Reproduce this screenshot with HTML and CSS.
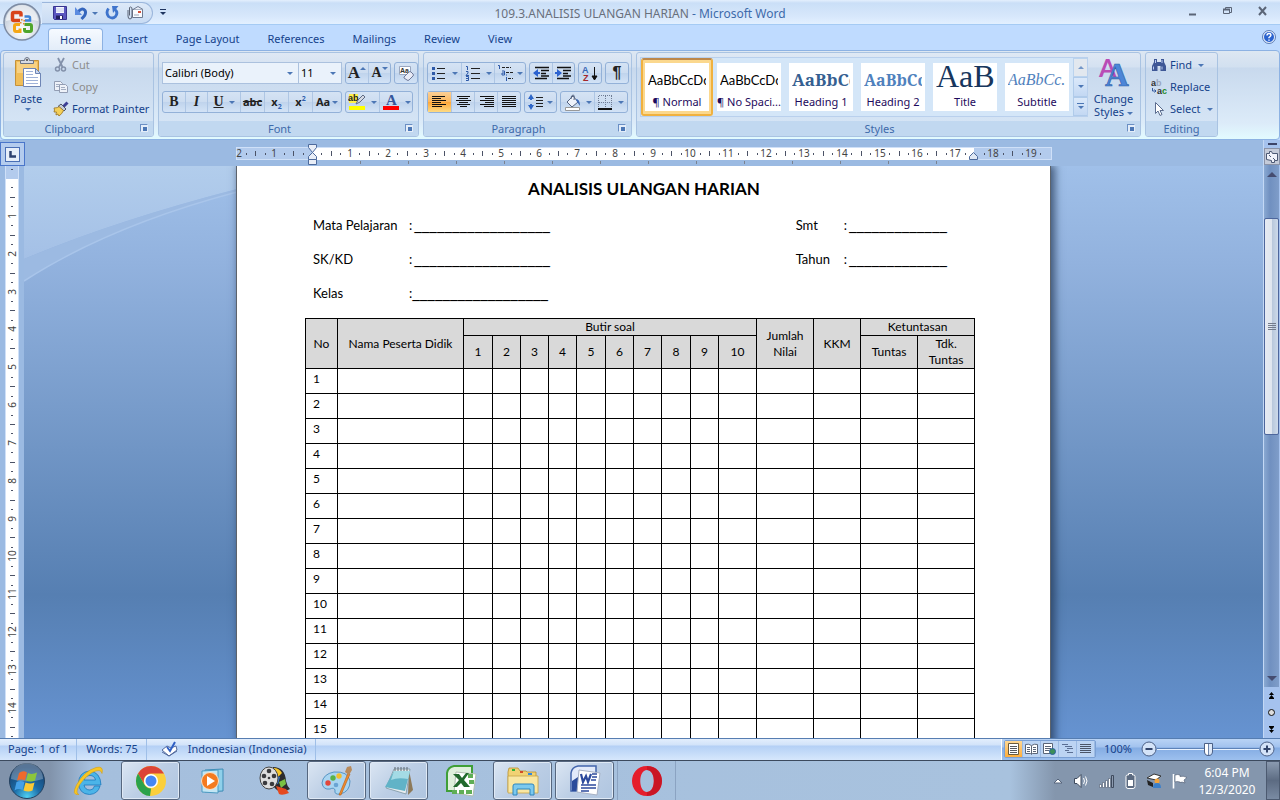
FILE: index.html
```html
<!DOCTYPE html>
<html lang="id">
<head>
    <meta charset="UTF-8">
    <meta name="viewport" content="width=device-width, initial-scale=1.0">
    <title>109.3.ANALISIS ULANGAN HARIAN - Microsoft Word</title>
    <link rel="stylesheet" href="styles.css">
</head>
<body>
    <header class="titlebar">
        <button class="orb" aria-label="Office Button">
            <svg width="38" height="38" viewBox="0 0 38 38">
                <defs>
                    <radialGradient id="orbBg" cx="50%" cy="75%" r="70%">
                        <stop offset="0" stop-color="#ffffff"/><stop offset=".5" stop-color="#dfe4ec"/><stop offset="1" stop-color="#b4bfce"/>
                    </radialGradient>
                </defs>
                <circle cx="19" cy="19" r="18" fill="url(#orbBg)" stroke="#7d8ba3" stroke-width="1.5"/>
                <path d="M3 18a16 16 0 0 1 32 0q-16-5-32 0z" fill="#fff" opacity=".6"/>
                <g fill="none">
                    <path d="M17 17.500h-6q-1.500 0-1.500-1.500v-5q0-1.500 1.500-1.500h5.500q1.500 0 1.500 1.500v2.500" stroke="#d8431a" stroke-width="3.500"/>
                    <path d="M21.500 13.500h4q1.500 0 1.500 1.500v2.500h-5" stroke="#3d83d6" stroke-width="2.500"/>
                    <path d="M17 21.500h-4q-1.500 0-1.500 1.500v4q0 1.500 1.500 1.500h4v-3" stroke="#f5a716" stroke-width="3"/>
                    <path d="M21.500 21.500h5.500q1.500 0 1.500 1.500v4q0 1.500-1.500 1.500h-4q-1.500 0-1.500-1.500v-2" stroke="#4fa52b" stroke-width="3"/>
                </g>
                <path d="M18 16h1.500v1.500H18zM20.500 17h1.500v1.500h-1.500zM17 19h1.500v1.500H17zM20 20h1.500v1.500H20z" fill="#e8832a"/>
            </svg>
        </button>
        <div class="quick">
            <button aria-label="Save">
                <svg width="16" height="16" viewBox="0 0 16 16"><path d="M1.500 1.500h13v13h-12l-1-1z" fill="#5a56c0" stroke="#38348f"/><path d="M4 2h8v6H4z" fill="#f4f6ff"/><path d="M4 4h8M4 6h8" stroke="#c5cbe8"/><path d="M4 10.500h7V14H4z" fill="#22205e"/><path d="M8 11h2v3H8z" fill="#fff"/></svg>
            </button>
            <button aria-label="Undo" class="undo">
                <svg width="14" height="16" viewBox="0 0 14 16"><path d="M4 7q4-5 7-1.500 2 3.500-3.500 8.500" fill="none" stroke="#3566bd" stroke-width="3"/><path d="M1 2v8h7z" fill="#5b8be0"/></svg>
                <i class="arrow"></i>
            </button>
            <button aria-label="Repeat">
                <svg width="16" height="16" viewBox="0 0 16 16"><path d="M4.500 3.500q-3 4 0 8 4 3 7 0 3-4-.5-7" fill="none" stroke="#3f74cc" stroke-width="2.800"/><path d="M8 1h6.500L9 8z" fill="#3f74cc"/></svg>
            </button>
            <button aria-label="E-mail">
                <svg width="18" height="16" viewBox="0 0 18 16"><path d="M6.500 4.500h10v8h-10z" fill="#fbfcff" stroke="#6e7a91"/><path d="M7 4.500l5-3 5 3" fill="#e8edf7" stroke="#6e7a91"/><path d="M12 6h3v2h-3z" fill="#d4503a"/><path d="M8 10h5" stroke="#9aa5b9"/><path d="M2 5v6q0 3 2 3t2-3V4q0-2-1.500-2T3.500 4v6.500" fill="none" stroke="#5a6375"/></svg>
            </button>
        </div>
        <button class="customize" aria-label="Customize Quick Access Toolbar"><span></span><i class="arrow dark"></i></button>
        <h1 class="caption">109.3.ANALISIS ULANGAN HARIAN <span>- Microsoft Word</span></h1>
        <div class="window-buttons">
            <button aria-label="Minimize"><svg width="11" height="10"><path d="M2 8.500h7" stroke="#5b6577" stroke-width="2"/></svg></button>
            <button aria-label="Restore"><svg width="11" height="10"><path d="M3.500 3V1.500h6v5H8M1.500 3.500h6v4h-6z" fill="none" stroke="#5b6577"/><path d="M1 3.500h7" stroke="#5b6577" stroke-width="2"/></svg></button>
            <button aria-label="Close"><svg width="11" height="10"><path d="M2 1l7 8M9 1l-7 8" stroke="#5b6577" stroke-width="2"/></svg></button>
        </div>
    </header>

    <nav class="tabs">
        <button class="tab active">Home</button>
        <button class="tab">Insert</button>
        <button class="tab">Page Layout</button>
        <button class="tab">References</button>
        <button class="tab">Mailings</button>
        <button class="tab">Review</button>
        <button class="tab">View</button>
        <button class="help" aria-label="Help"><svg width="14" height="14" viewBox="0 0 14 14"><circle cx="7" cy="7" r="6.500" fill="#e6eefb" stroke="#5b7bb4"/><circle cx="7" cy="7" r="5" fill="#2b63cf"/><path d="M5 5.500q0-2 2-2t2 1.500q0 1-2 2.500v.7M7 9.500v1.300" fill="none" stroke="#fff" stroke-width="1.400"/></svg></button>
    </nav>

    <div class="ribbon">
        <section class="group clipboard">
            <div class="group-body">
                <button class="big">
                    <svg width="28" height="32" viewBox="0 0 28 32"><path d="M1.500 3.500h23v25h-23z" fill="#f0bd57" stroke="#c4913a"/><path d="M3 5h20v11H3z" fill="#f7d183"/><path d="M6.500 6.500v-3h4q0-3 2.500-3t2.500 3h4v3z" fill="#d6dbe4" stroke="#6b7587"/><circle cx="13" cy="3" r="1" fill="#444"/><path d="M9.500 11.500h12l5 5v13h-17z" fill="#fff" stroke="#6e85b5"/><path d="M21.500 11.500v5h5z" fill="#cddaf0" stroke="#6e85b5"/><path d="M12 14.500h7M12 17.500h7M12 20.500h12M12 23.500h12M12 26.500h12" stroke="#9fb2d8"/></svg>
                    <span>Paste</span>
                    <i class="arrow"></i>
                </button>
                <div class="stack">
                    <button class="small" disabled>
                        <svg width="16" height="16" viewBox="0 0 16 16"><path d="M5 1l4.500 9M11 1L6 10" stroke="#8391aa" stroke-width="1.800" fill="none"/><circle cx="4.500" cy="12" r="2" fill="none" stroke="#8391aa" stroke-width="1.500"/><circle cx="10.500" cy="12" r="2" fill="none" stroke="#8391aa" stroke-width="1.500"/></svg>Cut
                    </button>
                    <button class="small" disabled>
                        <svg width="16" height="16" viewBox="0 0 16 16"><path d="M1.500 2.500h6l2 2v7h-8z" fill="#eef2f9" stroke="#929db3"/><path d="M6.500 5.500h6l2 2v6h-8z" fill="#eef2f9" stroke="#929db3"/><path d="M3 5.500h3M3 7.500h3M8 8.500h4M8 10.500h5" stroke="#a3aec2"/></svg>Copy
                    </button>
                    <button class="small">
                        <svg width="16" height="16" viewBox="0 0 16 16"><path d="M14.500 1.500l-4 4" stroke="#3d3f96" stroke-width="3"/><path d="M8 3l5 5-2 2-6-4.500z" fill="#c3cad8" stroke="#4b5468"/><path d="M1 7q4 0 5-1.500l4.500 4Q9 13 6 15q-1-1-1-2-1 .5-2 1 0-2 .5-3Q2 11 1 11q1-2 0-4z" fill="#f3cf58" stroke="#97701f" stroke-width=".8"/></svg>Format Painter
                    </button>
                </div>
            </div>
            <footer>Clipboard<i class="launcher"></i></footer>
        </section>

        <section class="group font">
            <div class="group-body rows">
                <div class="row">
                    <div class="combos">
                        <label class="combo family"><select aria-label="Font"><option>Calibri (Body)</option></select><i class="arrow"></i></label>
                        <label class="combo size"><select aria-label="Font Size"><option>11</option></select><i class="arrow"></i></label>
                    </div>
                    <div class="set">
                        <button class="serif" aria-label="Grow Font"><b class="grow">A</b><i class="arrow up"></i></button>
                        <button class="serif" aria-label="Shrink Font"><b>A</b><i class="arrow raised"></i></button>
                    </div>
                    <div class="set">
                        <button aria-label="Clear Formatting"><svg width="18" height="17" viewBox="0 0 18 17"><path d="M2.500 1.500h11v8h-11z" fill="#fff" stroke="#9aa7c0"/><text x="3" y="8" font-size="7" font-weight="700" font-family="Liberation Sans, sans-serif" fill="#333">Aa</text><path d="M7 12l5-5q1-1 2 0l2 2q1 1 0 2l-4 4q-1 1-2 0l-3-2z" fill="#e9ebf6" stroke="#6d7796"/></svg></button>
                    </div>
                </div>
                <div class="row">
                    <div class="set">
                        <button class="serif"><b>B</b></button>
                        <button class="serif"><em>I</em></button>
                        <button class="serif drop"><u>U</u><i class="arrow"></i></button>
                        <button class="mid bold"><s>abc</s></button>
                        <button class="mid bold" aria-label="Subscript"><span>x<sub>2</sub></span></button>
                        <button class="mid bold" aria-label="Superscript"><span>x<sup>2</sup></span></button>
                        <button class="aa bold" aria-label="Change Case">Aa<i class="arrow"></i></button>
                    </div>
                    <div class="set">
                        <button class="drop" aria-label="Text Highlight Color"><svg width="18" height="18" viewBox="0 0 18 18"><path d="M1 1h9v9H1z" fill="#fff04a"/><text x="0" y="8" font-size="9" font-weight="700" font-family="Liberation Sans, sans-serif" fill="#222">ab</text><path d="M8 11l2-4 5-5 2 2-5 5z" fill="#d5dae5" stroke="#5e6a82"/><path d="M1 13h16v4H1z" fill="#ff0"/></svg><i class="arrow"></i></button>
                        <button class="drop" aria-label="Font Color"><svg width="18" height="18" viewBox="0 0 18 18"><text x="4" y="12" font-size="15" font-weight="700" font-family="Liberation Serif, serif" fill="#35569b">A</text><path d="M1 13h16v4H1z" fill="#f00"/></svg><i class="arrow"></i></button>
                    </div>
                </div>
            </div>
            <footer>Font<i class="launcher"></i></footer>
        </section>

        <section class="group paragraph">
            <div class="group-body rows">
                <div class="row">
                    <div class="set">
                        <button class="drop" aria-label="Bullets"><svg width="16" height="16"><path d="M6 3.500h8M6 8.500h8M6 13.500h8" stroke="#222"/><path d="M1 2h3v3H1zM1 7h3v3H1zM1 12h3v3H1z" fill="#2f5aa8"/></svg><i class="arrow"></i></button>
                        <button class="drop" aria-label="Numbering"><svg width="16" height="16"><path d="M6 3.500h9M6 8.500h9M6 13.500h9" stroke="#222"/><path d="M1 1.500h1.500V5M1 6.500h2v1.500L1 10.500h3M1 11.500h2.500v4H1M1 13.500h2" fill="none" stroke="#2f5aa8"/></svg><i class="arrow"></i></button>
                        <button class="multi" aria-label="Multilevel List"><svg width="17" height="16"><path d="M5 2.500h9M9 7.500h7M11 13.500h5" stroke="#222" stroke-dasharray="3 1"/><path d="M1 .5h1.500V4M5 6h2.500v4H5V8h2.500M9.500 12v4M9.500 9.500v1" fill="none" stroke="#2f5aa8"/></svg><i class="arrow"></i></button>
                    </div>
                    <div class="set">
                        <button aria-label="Decrease Indent"><svg width="17" height="15"><path d="M2 1.500h14M8 4.500h8M8 7.500h5M8 10h8M2 12.500h12" stroke="#111" stroke-width="1.400"/><path d="M0 7l5-4v3h2v2H5v3z" fill="#2c62d0"/></svg></button>
                        <button aria-label="Increase Indent"><svg width="17" height="15"><path d="M2 1.500h14M8 4.500h8M8 7.500h5M8 10h8M2 12.500h12" stroke="#111" stroke-width="1.400"/><path d="M7 7L2 3v3H0v2h2v3z" fill="#2c62d0"/></svg></button>
                    </div>
                    <div class="set">
                        <button aria-label="Sort"><svg width="17" height="17"><text x="0" y="8" font-size="9" font-weight="700" font-family="Liberation Sans, sans-serif" fill="#3465b4">A</text><text x="1" y="16" font-size="9" font-weight="700" font-family="Liberation Sans, sans-serif" fill="#a4272b">Z</text><path d="M12.500 2v12M10 11l2.500 4 2.500-4z" stroke="#111" fill="#111"/></svg></button>
                    </div>
                    <div class="set">
                        <button class="pilcrow" aria-label="Show/Hide">¶</button>
                    </div>
                </div>
                <div class="row">
                    <div class="set aligns">
                        <button class="pressed" aria-label="Align Left"><svg width="15" height="12"><path d="M0 .5h13M0 2.500h9M0 4.500h14M0 6.500h9M0 8.500h14M0 10.500h10" stroke="#111"/></svg></button>
                        <button aria-label="Center"><svg width="15" height="12"><path d="M1 .5h13M3 2.500h9M0 4.500h15M3 6.500h9M1 8.500h13M4 10.500h7" stroke="#111"/></svg></button>
                        <button aria-label="Align Right"><svg width="15" height="12"><path d="M1 .5h14M6 2.500h9M1 4.500h14M6 6.500h9M1 8.500h14M5 10.500h10" stroke="#111"/></svg></button>
                        <button aria-label="Justify"><svg width="15" height="12"><path d="M0 .5h14M0 2.500h14M0 4.500h14M0 6.500h14M0 8.500h14M0 10.500h14" stroke="#111"/></svg></button>
                    </div>
                    <div class="set">
                        <button class="multi" aria-label="Line Spacing"><svg width="16" height="16"><path d="M3 2v4M3 10v4" stroke="#2f67c8" stroke-width="2"/><path d="M0 5l3-5 3 5zM0 11l3 5 3-5z" fill="#2f67c8"/><path d="M8 3.500h7M8 6.500h7M8 9.500h7M8 12.500h7" stroke="#222"/></svg><i class="arrow"></i></button>
                    </div>
                    <div class="set">
                        <button class="drop" aria-label="Shading"><svg width="17" height="17"><path d="M3 8l6-6 5 6-6 5z" fill="#eef2fa" stroke="#54627e"/><path d="M7 5q0-4 2-4t1 5" fill="none" stroke="#54627e"/><path d="M12 5q4 0 4 7-2-3-3-4z" fill="#3a68b8"/><path d="M1.500 13.500h14v3h-14z" fill="#fff" stroke="#999"/></svg><i class="arrow"></i></button>
                        <button class="drop" aria-label="Borders"><svg width="15" height="15"><path d="M1 .5h13M1 7.500h13M.5 1v12M7.500 1v12M13.500 1v12" stroke="#6e7c94" stroke-dasharray="1 1"/><path d="M0 14h14" stroke="#111" stroke-width="2"/></svg><i class="arrow"></i></button>
                    </div>
                </div>
            </div>
            <footer>Paragraph<i class="launcher"></i></footer>
        </section>

        <section class="group styles">
            <div class="group-body">
                <div class="gallery">
                    <button class="style selected"><span class="card"><span class="sample">AaBbCcDc</span><span class="name">¶ Normal</span></span></button>
                    <button class="style"><span class="card"><span class="sample">AaBbCcDc</span><span class="name">¶ No Spaci...</span></span></button>
                    <button class="style"><span class="card"><span class="sample h1">AaBbCc</span><span class="name">Heading 1</span></span></button>
                    <button class="style"><span class="card"><span class="sample h2">AaBbCc</span><span class="name">Heading 2</span></span></button>
                    <button class="style"><span class="card"><span class="sample title">AaB</span><span class="name">Title</span></span></button>
                    <button class="style"><span class="card"><span class="sample sub">AaBbCc.</span><span class="name">Subtitle</span></span></button>
                    <div class="gallery-scroll">
                        <button disabled aria-label="Row up"><i class="arrow up"></i></button>
                        <button aria-label="Row down"><i class="arrow"></i></button>
                        <button aria-label="More" class="more"><span></span><i class="arrow"></i></button>
                    </div>
                </div>
                <button class="big change">
                    <svg width="32" height="32" viewBox="0 0 32 32"><text x="1" y="20" font-size="25" font-weight="700" font-family="Lato, sans-serif" fill="#b94cb6">A</text><text x="7" y="29" font-size="33" font-weight="700" font-family="Liberation Serif, serif" fill="#4c86d8" stroke="#2f5ea8" stroke-width=".6">A</text></svg>
                    <span>Change</span>
                    <span>Styles <i class="arrow"></i></span>
                </button>
            </div>
            <footer>Styles<i class="launcher"></i></footer>
        </section>

        <section class="group editing">
            <div class="group-body">
                <div class="stack">
                    <button class="small"><svg width="16" height="16" viewBox="0 0 16 16"><path d="M3 2h3v3h4V2h3v3l2 4v5H9.500V9h-3v5H1V9l2-4z" fill="#3e5796"/><path d="M2.500 9.500v3M11 9.500v3M4.500 3v3M11 3v3" stroke="#b8caf0"/></svg>Find <i class="arrow"></i></button>
                    <button class="small"><svg width="16" height="16" viewBox="0 0 16 16"><text x="0" y="7" font-size="9" font-weight="700" font-family="Liberation Sans, sans-serif" fill="#333">a<tspan fill="#9aa6bd">b</tspan></text><text x="6" y="15" font-size="9" font-weight="700" font-family="Liberation Sans, sans-serif" fill="#333">a<tspan fill="#1f8a2a">c</tspan></text><path d="M1.500 9v3h3M3.500 10.500l1.500 1.500-1.500 1.500" fill="none" stroke="#355a9e"/></svg>Replace</button>
                    <button class="small"><svg width="16" height="16" viewBox="0 0 16 16"><path d="M4.500 1.500v11l2.500-2.500 2 4.500 2-1-2-4h3.500z" fill="#fff" stroke="#5b6c8e"/></svg>Select <i class="arrow"></i></button>
                </div>
            </div>
            <footer>Editing</footer>
        </section>
    </div>

    <main class="workspace">
        <div class="tab-corner"><button aria-label="Tab selector"><svg width="7" height="7"><path d="M1.500 0v5.500H7" fill="none" stroke="#2d4270" stroke-width="2.500"/></svg></button></div>
        <div class="hruler"><svg id="hruler" width="816" height="26"></svg></div>
        <div class="vruler"><svg id="vruler" width="24" height="572"></svg></div>
        <div class="desk">
            <svg class="swoosh" width="213" height="130" viewBox="0 0 213 130">
                <defs><linearGradient id="sky" x1="0" y1="0" x2="0" y2="1"><stop offset="0" stop-color="#b2cdec"/><stop offset="1" stop-color="#a4c0e6"/></linearGradient></defs>
                <path d="M0 0h213v23Q90 55 0 93z" fill="url(#sky)"/>
                <path d="M0 93Q90 55 213 23v3Q90 57 0 115z" fill="#9cbae2"/>
                <path d="M0 115Q85 60 213 26" fill="none" stroke="#a9c5ea" stroke-width="1.500"/>
            </svg>
            <article class="page">
                <h2>ANALISIS ULANGAN HARIAN</h2>
                <div class="identity">
                    <dl>
                        <dt>Mata Pelajaran</dt><dd>:<span>__________________</span></dd>
                        <dt>SK/KD</dt><dd>:<span>__________________</span></dd>
                        <dt>Kelas</dt><dd class="tight">:<span>__________________</span></dd>
                    </dl>
                    <dl class="right">
                        <dt>Smt</dt><dd>:<span>_____________</span></dd>
                        <dt>Tahun</dt><dd>:<span>_____________</span></dd>
                    </dl>
                </div>
                <table>
                    <colgroup>
                        <col class="c-no"><col class="c-name">
                        <col class="c-item wide"><col span="3" class="c-item"><col class="c-item wide">
                        <col span="2" class="c-item"><col class="c-item wide"><col class="c-item"><col class="c-ten">
                        <col class="c-sum"><col class="c-kkm"><col span="2" class="c-sum">
                    </colgroup>
                    <thead>
                        <tr>
                            <th rowspan="2">No</th>
                            <th rowspan="2">Nama Peserta Didik</th>
                            <th colspan="10">Butir soal</th>
                            <th rowspan="2">Jumlah Nilai</th>
                            <th rowspan="2">KKM</th>
                            <th colspan="2">Ketuntasan</th>
                        </tr>
                        <tr class="sub">
                            <th>1</th><th>2</th><th>3</th><th>4</th><th>5</th>
                            <th>6</th><th>7</th><th>8</th><th>9</th><th>10</th>
                            <th>Tuntas</th><th>Tdk. Tuntas</th>
                        </tr>
                    </thead>
                    <tbody id="students"></tbody>
                </table>
            </article>
        </div>
        <div class="scroll">
            <button class="split" aria-label="Split"></button>
            <button class="view-ruler" aria-label="View Ruler"><svg width="14" height="14" viewBox="0 0 14 14"><path d="M1.500 3.500h3v-2h2l1 2h5v7h-3v2h-3v-2l-5-1z" fill="#f0f2fa" stroke="#4c5874"/><path d="M4 5l2 2M8 8l2 2" stroke="#4c5874"/></svg></button>
            <div class="track">
                <button aria-label="Scroll up"><i class="arrow up dark"></i></button>
                <div class="thumb"><span></span></div>
                <button class="down" aria-label="Scroll down"><i class="arrow dark"></i></button>
            </div>
            <div class="browse">
                <button aria-label="Previous Page"><svg width="7" height="7"><path d="M1 3l2.500-3L6 3zM1 6l2.500-3L6 6z" fill="#000"/><path d="M1 6.500h5" stroke="#000"/></svg></button>
                <button aria-label="Select Browse Object"><svg width="7" height="7"><circle cx="3.500" cy="3.500" r="3" fill="#ddd" stroke="#111"/></svg></button>
                <button aria-label="Next Page"><svg width="7" height="7"><path d="M1 4l2.500 3L6 4zM1 1l2.500 3L6 1z" fill="#000"/><path d="M1 .5h5" stroke="#000"/></svg></button>
            </div>
        </div>
    </main>

    <footer class="status">
        <span class="cell page-no">Page: 1 of 1</span>
        <span class="cell">Words: 75</span>
        <span class="cell lang">
            <svg width="17" height="16" viewBox="0 0 17 16"><path d="M1 9l5-4 4 2 5-2 1 4-8 6z" fill="#fff" stroke="#52699c"/><path d="M1 11l7 4 8-5" fill="none" stroke="#52699c"/><path d="M6 6l3 4 5-9" fill="none" stroke="#2f5fc4" stroke-width="2"/></svg>
            Indonesian (Indonesia)
        </span>
        <div class="status-right">
            <div class="views">
                <button class="on" aria-label="Print Layout"><svg width="13" height="12"><path d="M1.500.5h10v11h-10z" fill="#fff" stroke="#6a5a3c"/><path d="M3 3.500h7M3 5.500h7M3 7.500h7M3 9.500h7" stroke="#55585f"/></svg></button>
                <button aria-label="Full Screen Reading"><svg width="13" height="12"><path d="M.5 1.500q3-1 6 1 3-2 6-1v9h-5l-1 1-1-1h-5z" fill="#fff" stroke="#5b6577"/><path d="M6.500 3v8M2 4.500h3M2 6.500h3M2 8.500h3M8 4.500h3M8 6.500h3M8 8.500h3" stroke="#5b6577"/></svg></button>
                <button aria-label="Web Layout"><svg width="13" height="12"><path d="M.5.5h9v10h-9z" fill="#fff" stroke="#5b6577"/><path d="M2 3.500h6M2 5.500h6M2 7.500h4" stroke="#5b6577"/><circle cx="9.500" cy="8.500" r="3" fill="#3c8f58" stroke="#2c5ea2"/></svg></button>
                <button aria-label="Outline"><svg width="13" height="12"><path d="M1 1.500h6M4 3.500h7M6 5.500h6M4 7.500h4M6 9.500h6" stroke="#5b6f93"/></svg></button>
                <button aria-label="Draft"><svg width="13" height="12"><path d="M1 1.500h11M1 3.500h11M1 5.500h11M1 7.500h11M1 9.500h11" stroke="#4b5568"/></svg></button>
            </div>
            <button class="percent">100%</button>
            <button class="round" aria-label="Zoom Out"><svg width="16" height="16"><circle cx="8" cy="8" r="7" fill="#d4e3f8" stroke="#4d6187"/><path d="M4.500 8h7" stroke="#33456b" stroke-width="2"/></svg></button>
            <input type="range" min="0" max="100" value="50" aria-label="Zoom">
            <button class="round" aria-label="Zoom In"><svg width="16" height="16"><circle cx="8" cy="8" r="7" fill="#d4e3f8" stroke="#4d6187"/><path d="M4.500 8h7M8 4.500v7" stroke="#33456b" stroke-width="2"/></svg></button>
        </div>
    </footer>

    <footer class="taskbar">
        <button class="start" aria-label="Start">
            <svg width="38" height="38" viewBox="0 0 38 38">
                <defs><radialGradient id="startBg" cx="50%" cy="95%" r="85%"><stop offset="0" stop-color="#4fd0f2"/><stop offset=".45" stop-color="#1c6ba6"/><stop offset="1" stop-color="#17406f"/></radialGradient></defs>
                <circle cx="19" cy="19" r="17.500" fill="url(#startBg)" stroke="#24415f"/>
                <path d="M3 17a16 16 0 0 1 32 0q-16 5-32 0z" fill="#fff" opacity=".28"/>
                <path d="M11 11q4-3 8-.5l-2 8q-4-2-8 0z" fill="#ee6a2c"/><path d="M20 11q4 2 9-.5l-2 8q-4 2-9 0z" fill="#8cc63c"/>
                <path d="M8.500 20q4-2 8 0l-2 8q-4-2-8 .5z" fill="#44a0e8"/><path d="M17.500 20.500q5 2 9 0l-2 8q-4 2-9 0z" fill="#fbc934"/>
            </svg>
        </button>
        <div class="apps">
            <button class="app" aria-label="Internet Explorer"><svg width="32" height="32" viewBox="0 0 32 32"><path d="M27 21q-2 8-10.500 8.500Q6 29 5.500 18 6 7 16.500 6q11 1 11.500 14H11q1 5 6 5 3.500 0 4.500-4zM11 15h11.500Q21.500 10.500 17 10.500T11 15z" fill="#4bb4e8" stroke="#1c78bd" stroke-width=".8"/><path d="M6 29.500Q-2 30.500 3.500 20 11 6 23 2.500q8-2 6 6Q28 3 19 7.500 8 15 4.500 24 3 29 6 29.500z" fill="#f7c624" stroke="#d59f14" stroke-width=".6"/></svg></button>
            <button class="app open" aria-label="Chrome"><svg width="32" height="32" viewBox="0 0 32 32"><circle cx="16" cy="16" r="15" fill="#fbcf3b"/><path d="M3 8.500A15 15 0 0 1 29 8.500H16a7.500 7.500 0 0 0-6.500 11z" fill="#dc4437"/><path d="M3 8.500l6.500 11.200q2 3.600 6.500 3.800L15 31A15 15 0 0 1 3 8.500z" fill="#2ba24c"/><circle cx="16" cy="16" r="7" fill="#fff"/><circle cx="16" cy="16" r="5.500" fill="#4587f3"/></svg></button>
            <button class="app" aria-label="Media Player"><svg width="32" height="32" viewBox="0 0 32 32"><path d="M8 5l18-1v22l-18 1z" fill="#8fd0ea" stroke="#3d8bb5"/><path d="M5 6l16-1v23l-16-1z" fill="#c2e6f4" stroke="#4b9ac2"/><circle cx="13" cy="16" r="8.500" fill="#f47b20" stroke="#fde2c6"/><path d="M10 11v10l8-5z" fill="#fff"/></svg></button>
            <button class="app" aria-label="Movie Maker"><svg width="32" height="32" viewBox="0 0 32 32"><path d="M14 2q12 0 13 14 1 5 4 8l-8 4q-8-4-9-8z" fill="#2b2b2e"/><path d="M15 3q5 0 8 5l-4 4q-2-5-4-6z" fill="#f5c52b"/><path d="M16 10l5 2-2 7-4-1z" fill="#3277d0"/><path d="M20 17l6-3 1 5-5 4z" fill="#79c143"/><path d="M17 21l10 3 3 4q-7 3-10 1z" fill="#e5491f"/><ellipse cx="10" cy="13" rx="9" ry="11" fill="#ddd" stroke="#444"/><g fill="#3a3a3d"><circle cx="10" cy="6" r="2.300"/><circle cx="5" cy="11" r="2.300"/><circle cx="15" cy="11" r="2.300"/><circle cx="6" cy="18" r="2.300"/><circle cx="13" cy="19" r="2.300"/><circle cx="10" cy="13" r="1.300"/></g></svg></button>
            <button class="app open" aria-label="Paint"><svg width="32" height="32" viewBox="0 0 32 32"><path d="M1 18Q2 9 13 7q14-1 16 9 0 11-10 13-6 1-5-4-1-3-5-1-7 1-8-6z" fill="#a9d5f1" stroke="#5795c4"/><circle cx="7" cy="18" r="2.700" fill="#e2473b"/><circle cx="12" cy="13" r="2.700" fill="#58b248"/><circle cx="18" cy="11" r="2.700" fill="#f3bd2c"/><circle cx="15" cy="20" r="2.300" fill="#6aa4d3"/><path d="M18 30l9-22 2 1-9 21z" fill="#f08b2c" stroke="#b45c16" stroke-width=".6"/><path d="M24 7l2-5 4-1 1 4-3 5z" fill="#b88a5c"/></svg></button>
            <button class="app open" aria-label="Notepad"><svg width="32" height="32" viewBox="0 0 32 32"><path d="M26 5l4 20-5 5z" fill="#8d7a5a"/><path d="M11 4h16l-4 25-20-6z" fill="#e8edf0" stroke="#708b96" stroke-width=".7"/><path d="M11 6h16l-5 20-20-4z" fill="#61b3c7"/><path d="M11 6h16l-2 8q-10-2-17 1z" fill="#a4dbe5"/><path d="M12 2v4M15 2v4M18 2v4M21 2v4M24 2v4" stroke="#5d6670"/></svg></button>
            <button class="app" aria-label="Excel"><svg width="32" height="32" viewBox="0 0 32 32"><path d="M2 8q1-6 7-7h18v25H2z" fill="#dff0dc" stroke="#3f9f37" stroke-width="2"/><path d="M11 7l20 2-3 22-19-3z" fill="#fff" stroke="#b1beb0"/><path d="M8 9h6l3 4 4-5h3l-5 7 6 7h-6l-3-4-4 4H8l6-7z" fill="#22692d"/><path d="M23 9h5v4h-5zM24 15h5v4h-5zM7 25h5v4H7zM14 25h5v4h-5zM21 25h6v4h-6z" fill="#5fae55"/></svg></button>
            <button class="app open" aria-label="Explorer"><svg width="34" height="32" viewBox="0 0 34 32"><path d="M2 7l1-4h9l2 3h6l1 1h9v20H2z" fill="#f1d274" stroke="#b9912f" stroke-width=".8"/><path d="M6 4h3v2H6z" fill="#31b536"/><path d="M14 6h3v2h-3z" fill="#d44a28"/><path d="M22 8h4v2h-4z" fill="#2f88e0"/><path d="M2 11h30v17H2z" fill="#f9e7a3" stroke="#c6a348" stroke-width=".8"/><path d="M7 30V21q0-2 2-2h17q2 0 2 2v9h-4v-6H11v6z" fill="#7cc9ee" stroke="#2e86bd"/></svg></button>
            <button class="app open" aria-label="Word"><svg width="32" height="32" viewBox="0 0 32 32"><path d="M2 8q1-6 7-7h18v25H2z" fill="#e2eafa" stroke="#4264ac" stroke-width="1.500"/><path d="M3 16l6-4v14H3z" fill="#2b4c9b"/><path d="M10 5l21 3-3 22-20-3z" fill="#fff" stroke="#a7b1c4"/><path d="M12 9l2 8 3-6 2 6 3-8" fill="none" stroke="#2c4a9c" stroke-width="2.200"/><path d="M23 9h5M23 12h5M22 15h5M12 20h15M12 23h15M12 26h8" stroke="#2c4a9c" stroke-width="1.600"/></svg></button>
            <button class="app opera" aria-label="Opera"><svg width="32" height="32" viewBox="0 0 32 32"><path fill-rule="evenodd" d="M16 1c20 0 20 30 0 30S-4 1 16 1zm0 4C7 5 7 27 16 27s9-22 0-22z" fill="#e51d2c"/><path d="M16 1q14 1 15 15-1 14-15 15v-4q7-1 7-11T16 5z" fill="#b8101f" opacity=".6"/></svg></button>
        </div>
        <div class="tray">
            <svg width="10" height="6"><path d="M1 5l4-4 4 4z" fill="#fff" stroke="#56657c"/></svg>
            <svg width="16" height="16" viewBox="0 0 16 16"><path d="M1.500 5.500h2.500l4-4v13l-4-4H1.500z" fill="#fff" stroke="#3f4b5e"/><path d="M10.500 5q2 3 0 6M12.500 3.500q3 4.500 0 9" fill="none" stroke="#fff"/></svg>
            <svg width="16" height="14" viewBox="0 0 16 14"><path d="M.5 10.500h2v3h-2zM3.500 8.500h2v5h-2zM6.500 6.500h2v7h-2zM9.500 4.500h2v9h-2z" fill="#fff" stroke="#4b586d" stroke-width=".6"/><path d="M12.500 1.500h2v12h-2z" fill="#8d9bb0" stroke="#3f4b5e"/></svg>
            <svg width="11" height="16" viewBox="0 0 11 16"><path d="M3.500 2V.5h4V2h1q1.500 0 1.500 1.500v10q0 2-2 2H3q-2 0-2-2v-10Q1 2 2.500 2z" fill="#5b6a80" stroke="#fff"/><path d="M3 7h5v6H3z" fill="#fff"/></svg>
            <svg width="16" height="16" viewBox="0 0 16 16"><path d="M1 5l7-4 7 2-5 4z" fill="#fff" stroke="#333"/><path d="M1 7l6 3v4l-5-2z" fill="#222"/><circle cx="11" cy="8" r="2.500" fill="#f2a33c"/><path d="M7 15q0-5 4-5t4 5z" fill="#3b7fc9"/></svg>
            <svg width="16" height="16" viewBox="0 0 16 16"><path d="M1.500 1v14.500" stroke="#fff" stroke-width="1.600"/><path d="M3 2q3-1 5 0v1.500q3-1 7 1l-3 2.500 1 3q-3-1.500-5-.500V9Q5 8 3 9z" fill="#fff" stroke="#4b586d" stroke-width=".6"/></svg>
        </div>
        <div class="clock"><time>6:04 PM</time><time>12/3/2020</time></div>
        <button class="show-desktop" aria-label="Show desktop"></button>
    </footer>
    <script src="script.js"></script>
</body>
</html>
```

FILE: styles.css
```css
* {
    box-sizing: border-box;
}
body {
    margin: 0;
    height: 100vh;
    display: flex;
    flex-direction: column;
    overflow: hidden;
    font: 11px/16px "Noto Sans", "Open Sans", sans-serif;
    color: #15428b;
    background: #bfdbff;
}
button, select {
    font: inherit;
    color: inherit;
    background: none;
    border: 0;
    padding: 0;
    margin: 0;
}
button {
    display: flex;
    align-items: center;
    justify-content: center;
}
svg {
    flex: none;
    display: block;
}
.arrow {
    display: inline-block;
    flex: none;
    border: 3px solid transparent;
    border-top-color: #4c77b5;
    border-bottom: 0;
}
.arrow.up {
    border-top: 0;
    border-bottom: 3px solid #4c77b5;
}
.arrow.dark {
    border-top-color: #1f3560;
}

/* title bar */
.titlebar {
    position: relative;
    flex: none;
    height: 25px;
    display: flex;
    align-items: center;
    padding-left: 42px;
    background: linear-gradient(#e4effd 0, #cadff7 3px, #d7e7fb 16px, #e3f0ff);
    border-bottom: 1px solid #a5cbf4;
}
.orb {
    position: absolute;
    left: 3px;
    top: 3px;
    z-index: 2;
}
.quick {
    display: flex;
    align-items: center;
    gap: 6px;
    height: 22px;
    margin-top: 2px;
    padding: 0 8px 0 10px;
    border: 1px solid #9bb6dc;
    border-left: 0;
    border-radius: 0 11px 11px 0;
    background: linear-gradient(#dde9f8, #c9dcf4);
}
.undo {
    gap: 4px;
}
.customize {
    flex-direction: column;
    gap: 2px;
    margin-left: 7px;
}
.customize span {
    width: 6px;
    height: 1px;
    background: #1f3560;
}
.caption {
    position: absolute;
    left: 0;
    right: 0;
    margin: 0;
    padding-top: 3px;
    text-align: center;
    font-size: 12px;
    font-weight: 400;
    color: #69707c;
    pointer-events: none;
}
.caption span {
    color: #3e6aaa;
}
.window-buttons {
    display: flex;
    gap: 24px;
    margin-left: auto;
    padding: 0 12px 2px 0;
}

/* tabs */
.tabs {
    flex: none;
    display: flex;
    align-items: flex-end;
    height: 25px;
    padding: 0 5px 0 48px;
}
.tab {
    height: 22px;
    padding: 0 14px;
}
.tab.active {
    padding: 0 11px;
    background: linear-gradient(#f6faff, #e3edf9);
    border: 1px solid #8db2e3;
    border-bottom: 0;
    border-radius: 4px 4px 0 0;
}
.help {
    margin: 0 -1px 6px auto;
}

/* ribbon */
.ribbon {
    flex: none;
    display: flex;
    gap: 4px;
    height: 90px;
    padding: 1px 2px 2px;
    border: 1px solid #8db2e3;
    border-radius: 4px;
    background: linear-gradient(#dde7f2 0, #d2e0f0 16px, #c8d9ed 17px, #dcebf9 72px, #e2fbff);
}
.group {
    display: flex;
    flex-direction: column;
    height: 85px;
    border: 1px solid #a9c3e2;
    border-radius: 3px;
    overflow: hidden;
    background: linear-gradient(#dfe8f4 0, #d4e1f1 14px, #c8d9ed 15px, #d8e7f7);
}
.clipboard { width: 151px; }
.font { width: 261px; }
.paragraph { width: 209px; }
.styles { width: 505px; }
.editing { width: 73px; }
.group footer {
    display: flex;
    align-items: center;
    justify-content: center;
    position: relative;
    height: 15px;
    padding-right: 18px;
    background: #c1d8f0;
    color: #3e6aaa;
}
.editing footer {
    padding: 0;
}
.launcher {
    position: absolute;
    right: 5px;
    top: 3px;
    width: 8px;
    height: 8px;
    border: 1px solid #6a8fc4;
    border-right-color: transparent;
    border-bottom-color: transparent;
    background: linear-gradient(#4c77b5, #4c77b5) 100% 100% / 4px 4px no-repeat, #e3edf9;
}
.group-body {
    flex: 1;
    display: flex;
    min-height: 0;
}
.group-body.rows {
    flex-direction: column;
    gap: 7px;
    padding: 9px 3px 0;
}
.row {
    display: flex;
    gap: 3px;
}
.big {
    flex-direction: column;
    justify-content: flex-start;
    width: 42px;
    padding-top: 4px;
    margin: 0 3px;
}
.big svg {
    margin-bottom: 2px;
}
.clipboard .arrow {
    margin-top: 1px;
}
.stack {
    display: flex;
    flex-direction: column;
    padding-top: 1px;
}
.small {
    height: 22px;
    gap: 3px;
    justify-content: flex-start;
    padding: 0 1px;
}
.small .arrow {
    margin-left: 3px;
}
.small:disabled {
    color: #8d8d8d;
}
.editing .stack {
    padding-left: 4px;
}

.combos {
    display: flex;
}
.combo {
    position: relative;
    height: 22px;
    border: 1px solid #abc1de;
    background: #eaf2fb;
}
.combo + .combo {
    border-left: 0;
}
.combo select {
    width: 100%;
    height: 20px;
    padding-left: 2px;
    appearance: none;
    color: #000;
}
.combo .arrow {
    position: absolute;
    right: 5px;
    top: 9px;
}
.family { width: 137px; }
.size { width: 43px; }
.set {
    display: flex;
    height: 22px;
    border: 1px solid #93b1d8;
    border-radius: 3px;
    background: linear-gradient(#d5e3f4 0, #ccdcf0 50%, #bfd3ec 50%, #d3e3f6);
}
.set button {
    width: 22px;
    color: #222;
}
.set button + button {
    border-left: 1px solid #aec6e4;
}
.aligns button {
    width: 23px;
}
.set .drop {
    width: 33px;
    gap: 5px;
}
.set .mid { width: 24px; }
.set .multi {
    width: 31px;
    gap: 3px;
}
.set .aa {
    width: 29px;
    gap: 2px;
}
.set .serif {
    font: 14px/18px "Liberation Serif", serif;
    font-weight: 700;
}
.set .grow {
    font-size: 17px;
}
.set .serif .up, .set .raised {
    align-self: flex-start;
    margin-top: 4px;
}
.bold {
    font-weight: 700;
}
.bold sub, .bold sup {
    font-size: 7px;
    line-height: 0;
    color: #2f5fae;
}
.set .pilcrow {
    font: 16px/18px "Liberation Sans", sans-serif;
    font-weight: 700;
}
.set .pressed {
    background: linear-gradient(#fbcf96, #fdb75b 50%, #ffa637 50%, #fdda83);
}

/* styles gallery */
.gallery {
    display: flex;
    height: 60px;
    margin: 4px 0 0 3px;
    border: 1px solid #b9d0ed;
    background: #d4e6f8;
}
.style {
    width: 72px;
}
.style.selected {
    border: 2px solid #f0b13f;
    border-top-color: #bd874a;
    border-radius: 3px;
    background: #fbd88e;
}
.card {
    display: flex;
    flex-direction: column;
    width: 64px;
    height: 48px;
    flex: none;
    background: #fff;
    overflow: hidden;
}
.sample {
    height: 31px;
    margin: 0 3px;
    overflow: hidden;
    white-space: nowrap;
    text-align: left;
    font: 13px/34px "Lato", sans-serif;
    color: #000;
}
.sample.h1, .sample.h2 {
    font: 17px/34px "Noto Serif", "Liberation Serif", serif;
    font-weight: 700;
    color: #365f91;
}
.sample.h2 {
    font-size: 16px;
    color: #4f81bd;
}
.sample.title {
    font: 32px/26px "Liberation Serif", serif;
    color: #17365d;
}
.sample.sub {
    font: italic 16px/34px "Liberation Serif", serif;
    color: #4f81bd;
}
.name {
    line-height: 15px;
    white-space: nowrap;
    text-align: center;
    color: #1d0a5c;
}
.gallery-scroll {
    display: flex;
    flex-direction: column;
    width: 14px;
}
.gallery-scroll button {
    flex: 1;
    border: 1px solid #b0cbea;
    border-right: 0;
    background: linear-gradient(#dbe9fa, #c3d8f3);
}
.gallery-scroll button:disabled {
    background: #e9eaec;
    opacity: .7;
}
.gallery-scroll .more {
    flex-direction: column;
    gap: 2px;
}
.more span {
    width: 7px;
    height: 1px;
    background: #4c77b5;
}
.big.change {
    margin: 0 2px;
    width: 47px;
    line-height: 13px;
}
.change svg {
    margin-bottom: 3px;
}
.change .arrow {
    vertical-align: middle;
}

/* document area */
.workspace {
    flex: 1;
    min-height: 0;
    display: grid;
    grid-template: 26px minmax(0, 1fr) / 24px minmax(0, 1fr) 17px;
    background: #9bbae2;
}
.tab-corner {
    display: flex;
    align-items: center;
    justify-content: center;
    margin: 2px 0 0;
    width: 25px;
    border: 1px solid #4a76ca;
    background: #b4ccee;
}
.tab-corner button {
    width: 15px;
    height: 15px;
    border: 1px solid #4a6fb5;
    background: #e6eef9;
}
.hruler {
    display: flex;
    justify-content: center;
}
.vruler {
    overflow: hidden;
}
.desk {
    position: relative;
    display: flex;
    justify-content: center;
    overflow: hidden;
    background: linear-gradient(#a0c0e9 0, #92b2de 17%, #567fb2 75%, #6693d1 100%);
}
.swoosh {
    position: absolute;
    left: 0;
    top: 0;
}
.page {
    position: relative;
    width: 815px;
    height: 1200px;
    flex: none;
    padding: 12px 75px 0 68px;
    background: #fff;
    border-left: 1px solid #5d636b;
    border-right: 1px solid #5d636b;
    box-shadow: 3px 0 8px 1px rgba(30, 50, 80, .7);
    color: #000;
    font: 13px/17px "Lato", sans-serif;
}
.page h2 {
    margin: 0 0 17px;
    padding-left: 8px;
    font-size: 17px;
    line-height: 22px;
    text-align: center;
}
.identity {
    display: flex;
    justify-content: space-between;
    padding: 0 28px 0 8px;
}
.identity dl {
    display: grid;
    grid-template-columns: 96px auto;
    grid-auto-rows: 17px;
    align-content: start;
    row-gap: 17px;
    margin: 0;
}
.identity dl.right {
    grid-template-columns: 48px auto;
}
.identity dd {
    margin: 0;
    display: flex;
    gap: 2px;
}
.identity .tight {
    gap: 0;
}
.identity dd span {
    font: 17px/15px "Noto Sans", sans-serif;
}
table {
    margin-top: 16px;
    width: 670px;
    table-layout: fixed;
    border-collapse: collapse;
    font-size: 12px;
}
.c-no { width: 32px; }
.c-name { width: 126px; }
.c-item { width: 28px; }
.c-item.wide { width: 29px; }
.c-ten { width: 38px; }
.c-sum { width: 57px; }
.c-kkm { width: 47px; }
th, td {
    border: 1px solid #000;
    padding: 0;
}
th {
    height: 17px;
    line-height: 16px;
    font-weight: 400;
    background: #d9d9d9;
}
.sub th {
    height: 33px;
}
td {
    height: 25px;
    padding: 1px 0 0 7px;
    vertical-align: top;
}

/* scrollbar */
.scroll {
    grid-area: 1 / 3 / 3 / 4;
    display: flex;
    flex-direction: column;
    border-left: 1px solid #c3d8f5;
    background: #a5c2ee;
}
.split {
    height: 8px;
}
.split::before {
    content: "";
    width: 9px;
    height: 2px;
    background: #3c4468;
}
.view-ruler {
    height: 17px;
    border: 1px solid #8b93a8;
    background: #c5cbd9;
}
.track {
    flex: 1;
    display: flex;
    flex-direction: column;
    margin-right: 1px;
    background: linear-gradient(90deg, #8aa9d2, #7090c0 40%, #7f9dc9);
}
.track button {
    height: 18px;
}
.track .arrow {
    border-width: 5px;
    border-bottom-width: 0;
    border-top-color: #454c70;
}
.track .arrow.up {
    border-top: 0;
    border-bottom: 5px solid #454c70;
}
.thumb {
    flex: none;
    display: flex;
    align-items: center;
    justify-content: center;
    height: 217px;
    margin-top: 35px;
    border: 1px solid #4d669c;
    border-radius: 2px;
    background: linear-gradient(90deg, #e6eaf2, #dfe6ef 50%, #b6c6da 51%, #cddaea);
}
.thumb span {
    width: 8px;
    height: 8px;
    background: repeating-linear-gradient(#747c8c 0 1px, transparent 1px 2px);
}
.track .down {
    margin-top: auto;
}
.browse {
    height: 51px;
    display: flex;
    flex-direction: column;
}
.browse button {
    flex: 1;
    padding-right: 2px;
}

/* status bar */
.status {
    flex: none;
    display: flex;
    height: 22px;
    border-top: 1px solid #567db1;
    background: linear-gradient(#e3eefc 0, #d2e3f9 6px, #b4d0f5 7px, #d6e7fc);
}
.cell {
    display: flex;
    align-items: center;
    gap: 8px;
    padding: 0 8px 2px 9px;
    border-right: 1px solid #9fbfe8;
}
.page-no {
    padding-left: 8px;
}
.lang {
    gap: 4px;
    padding-left: 8px;
}
.lang svg {
    margin: 0 6px;
}
.status-right {
    display: flex;
    align-items: center;
    margin-left: auto;
    padding: 0 5px 1px 2px;
    border-left: 1px solid #fff;
    background: linear-gradient(#b9d3f5 0, #a2c2ee 8px, #84ace3 9px, #9dc0ee);
}
.views {
    display: flex;
    height: 18px;
    border: 1px solid #7ba0d4;
    border-radius: 2px;
    background: #bcd4f3;
}
.views button {
    width: 18px;
    border-right: 1px solid #9bbae3;
}
.views .on {
    background: linear-gradient(#fdd795, #ffae3c);
}
.percent {
    margin: 0 9px 0 8px;
}
input[type=range] {
    width: 102px;
    height: 16px;
    margin: 0;
    appearance: none;
    background: linear-gradient(#5d82b8, #5d82b8) 0 7px / 100% 1px no-repeat, linear-gradient(#e8f2ff, #e8f2ff) 0 8px / 100% 1px no-repeat;
}
input[type=range]::-webkit-slider-thumb {
    appearance: none;
    width: 9px;
    height: 13px;
    border: 1px solid #4d6187;
    border-radius: 1px 1px 5px 5px;
    background: linear-gradient(90deg, #fff 40%, #6c83ab 40% 60%, #dce8f9 60%);
}

/* taskbar */
.taskbar {
    flex: none;
    display: flex;
    height: 40px;
    border-top: 1px solid #3c4a5e;
    background: linear-gradient(90deg, #8193ab 0, #8193ab 50px, #a5bfdd 90px, #a8c2de calc(100% - 270px), #8496ad calc(100% - 225px));
}
.start {
    width: 53px;
}
.apps {
    display: flex;
    gap: 3px;
    margin-left: 6px;
}
.app {
    width: 59px;
}
.app.open {
    border: 1px solid #56677f;
    border-radius: 3px;
    background: linear-gradient(135deg, #dbe6f3, #bccee5 50%, #afc5e0);
    box-shadow: inset 0 0 0 1px #dfe9f5;
}
.app.opera {
    border-left: 1px solid #8ba3c2;
    border-right: 1px solid #8ba3c2;
}
.tray {
    display: flex;
    align-items: center;
    gap: 10px;
    margin-left: auto;
}
.clock {
    display: flex;
    flex-direction: column;
    align-items: center;
    justify-content: center;
    width: 78px;
    color: #fff;
    font-size: 12px;
    line-height: 17px;
}
.show-desktop {
    width: 14px;
    border: 1px solid #4c5a70;
    background: linear-gradient(#8a9ab0, #5c6b82 50%, #7a8ba3);
}
```

FILE: script.js
```js
var NS = 'http://www.w3.org/2000/svg';
var CM = 37.84;

function add(svg, name, attrs, text) {
    var el = document.createElementNS(NS, name);
    for (var key in attrs) {
        el.setAttribute(key, attrs[key]);
    }
    if (text) el.textContent = text;
    svg.appendChild(el);
}

// horizontal ruler, zero sits at 76px
var h = document.getElementById('hruler');
add(h, 'rect', { x: 0.5, y: 7.5, width: 815, height: 12, fill: '#b3cbed', stroke: '#cfe0f8' });
add(h, 'rect', { x: 76, y: 8, width: 662, height: 12, fill: '#fff' });
for (var q = -8; q <= 77; q++) {
    var x = Math.round(76 + q * CM / 4);
    if (q == 0 || q == 70) continue;
    if (q % 4 == 0) {
        add(h, 'text', { x: Math.max(x, 3), y: 17, 'text-anchor': 'middle', 'font-size': 10, fill: '#444' }, Math.abs(q / 4));
    } else if (q % 2 == 0) {
        add(h, 'rect', { x: x, y: 11, width: 1, height: 5, fill: '#4b5266' });
    } else {
        add(h, 'rect', { x: x, y: 13, width: 1, height: 2, fill: '#4b5266' });
    }
}
for (var t = 124; t < 738; t += 48) {
    add(h, 'rect', { x: t, y: 21, width: 1, height: 3, fill: '#7b8290' });
}
add(h, 'path', { d: 'M72.500 4.500h8v3l-4 5 4 4v3h-8v-3l4-4-4-5z', fill: '#e9eef7', stroke: '#4d6a9c' });
add(h, 'path', { d: 'M72.500 19.500h8v5h-8z', fill: '#e9eef7', stroke: '#4d6a9c' });
add(h, 'path', { d: 'M733.500 19.500v-3l4-4 4 4v3z', fill: '#dfe8f5', stroke: '#4d6a9c' });

// vertical ruler, zero sits at 12px
var v = document.getElementById('vruler');
add(v, 'rect', { x: 5.5, y: -1, width: 13, height: 574, fill: '#fff', stroke: '#cfe0f8' });
add(v, 'rect', { x: 6, y: 0, width: 12, height: 13, fill: '#b3cbed' });
for (q = -1; q <= 59; q++) {
    var y = Math.round(12 + q * CM / 4);
    if (q == 0) continue;
    if (q % 4 == 0) {
        add(v, 'text', { x: 0, y: 0, transform: 'translate(16 ' + y + ') rotate(-90)', 'text-anchor': 'middle', 'font-size': 10, fill: '#444' }, q / 4);
    } else if (q % 2 == 0) {
        add(v, 'rect', { x: 10, y: y, width: 5, height: 1, fill: '#4b5266' });
    } else {
        add(v, 'rect', { x: 11, y: y, width: 2, height: 1, fill: '#4b5266' });
    }
}

// one numbered row per student
var body = document.getElementById('students');
for (var i = 1; i <= 20; i++) {
    var row = body.insertRow();
    row.insertCell().textContent = i;
    for (var c = 1; c < 16; c++) {
        row.insertCell();
    }
}
```
